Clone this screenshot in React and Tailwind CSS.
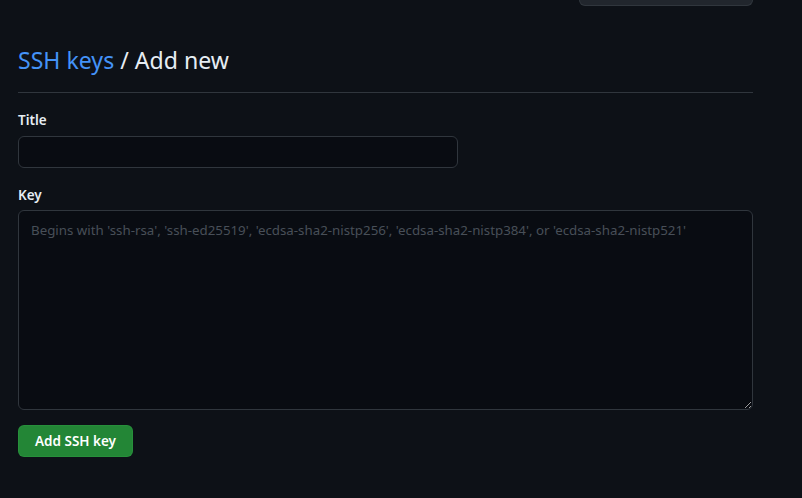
export default function App() {
  return (
    <div className="min-h-[498px] w-full bg-[#0d1117] text-[#e6edf3]" style={{ fontFamily: '"Noto Sans", "Open Sans", sans-serif' }}>
      <div className="flex justify-end pr-[49px]">
        <div className="h-[6px] w-[174px] rounded-b-md border border-t-0 border-[#30363d] bg-[#21262d]" />
      </div>
      <div className="ml-[18px] w-[735px] pt-[38px]">
        <div className="border-b border-[#30363d] pb-[16px]">
          <h1 className="text-[23.1px] font-normal leading-[32px]">
            <span className="text-[#4493f8]">SSH keys</span>
            <span className="text-[#e6edf3]"> / Add new</span>
          </h1>
        </div>
        <form className="pt-[17px]">
          <label className="block text-[13.5px] font-semibold leading-[20px]">Title</label>
          <input
            type="text"
            className="mt-[6px] block h-[32px] w-[440px] rounded-md border border-[#30363d] bg-[#090c12] px-3 text-[14px] outline-none"
          />
          <label className="mt-[17px] block text-[13.5px] font-semibold leading-[20px]">Key</label>
          <textarea
            className="mt-[5px] block h-[200px] w-[735px] rounded-md border border-[#30363d] bg-[#090c12] px-3 py-[9px] text-[13.3px] leading-[20px] outline-none placeholder:text-[#484f58]"
            placeholder="Begins with 'ssh-rsa', 'ssh-ed25519', 'ecdsa-sha2-nistp256', 'ecdsa-sha2-nistp384', or 'ecdsa-sha2-nistp521'"
          />
          <button
            type="button"
            className="mt-[15px] h-[32px] rounded-md border border-[#2ea043]/40 bg-[#238636] px-[16px] text-[13.5px] font-semibold text-white"
          >
            Add SSH key
          </button>
        </form>
      </div>
    </div>
  )
}
